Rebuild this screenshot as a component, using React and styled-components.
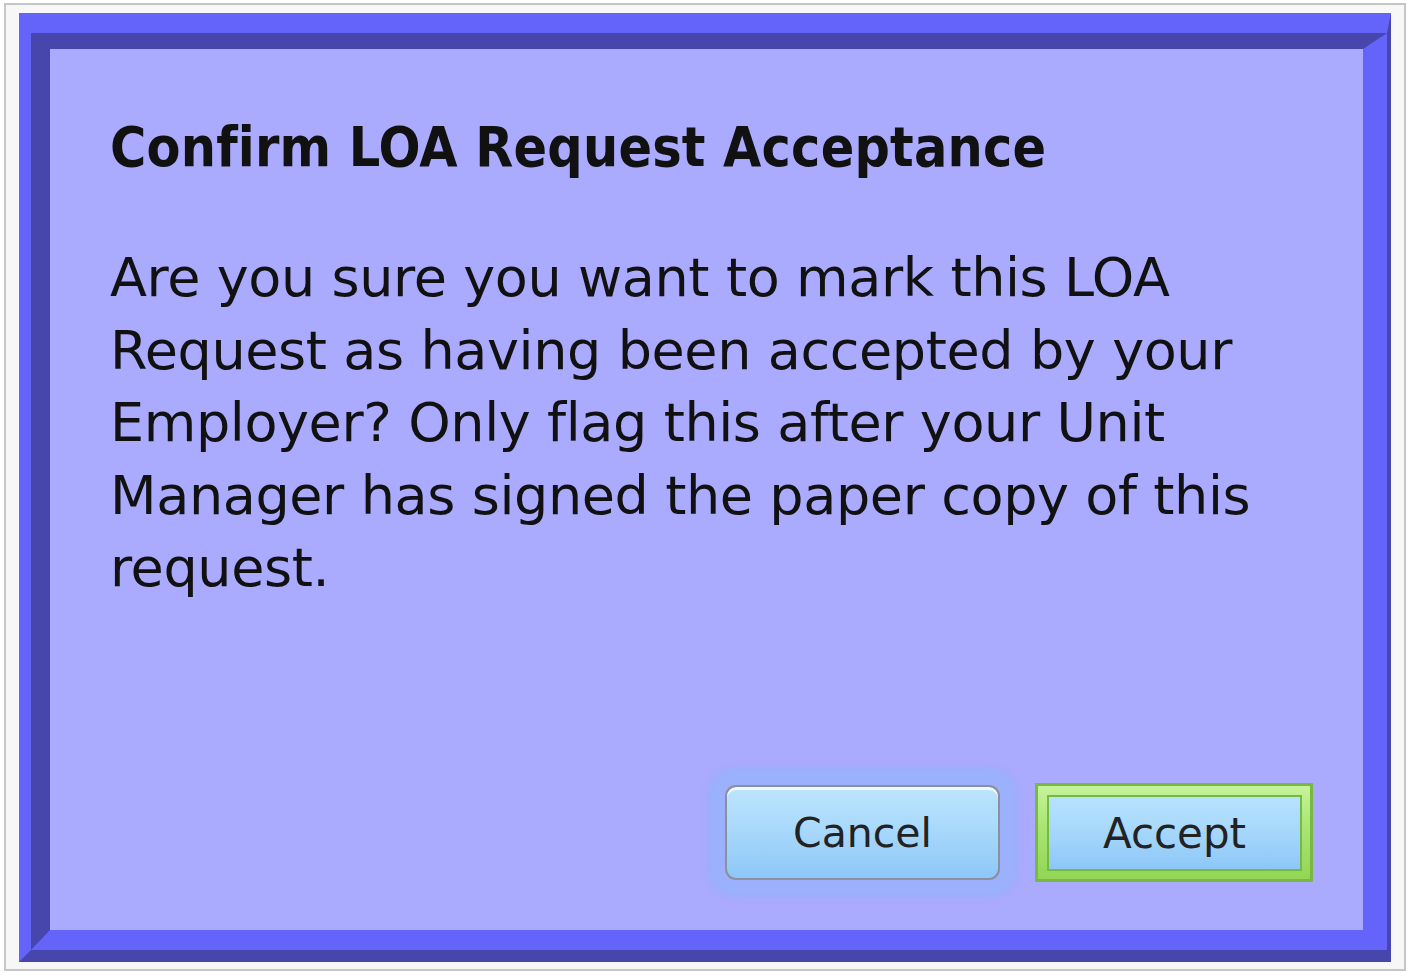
import styled, { createGlobalStyle } from "styled-components";

const GlobalStyle = createGlobalStyle`
  html, body {
    margin: 0;
    padding: 0;
    background: #ffffff;
  }
  * {
    box-sizing: border-box;
  }
`;

const Page = styled.div`
  display: flex;
  flex-direction: column;
  width: 1402px;
  height: 968px;
  margin: 3px 4px;
  padding: 8px 13px 7px 13px;
  background: #f7f7f7;
  border: 2px solid #c6c6c6;
`;

const FrameOuter = styled.div`
  flex: 1;
  display: flex;
  flex-direction: column;
  border-style: solid;
  border-width: 20px 4px 12px 12px;
  border-color: #6464fa #4646ac #4646ac #6464fa;
`;

const FrameInner = styled.div`
  flex: 1;
  display: flex;
  flex-direction: column;
  padding: 65px 50px 48px 60px;
  background: #aaaafe;
  border-style: solid;
  border-width: 16px 24px 20px 19px;
  border-color: #4646ac #6464fa #6464fa #4646ac;
  font-family: "DejaVu Sans", Verdana, sans-serif;
  color: #111;
`;

const Title = styled.h2`
  margin: 0;
  font-family: "DejaVu Sans Condensed", "DejaVu Sans", sans-serif;
  font-size: 55px;
  font-weight: 700;
  line-height: 1.2;
  letter-spacing: 0.2px;
`;

const Message = styled.p`
  margin: 62px 0 0 0;
  font-size: 54px;
  line-height: 72.5px;
  font-weight: 400;
  letter-spacing: -0.4px;
`;

const Actions = styled.div`
  margin-top: auto;
  display: flex;
  justify-content: flex-end;
  align-items: center;
  gap: 35px;
`;

const CancelButton = styled.button`
  width: 275px;
  height: 95px;
  border: 2px solid #8a909e;
  border-radius: 11px;
  background: linear-gradient(#bde5fd 0%, #a9d9fb 45%, #8dc7f8 100%);
  box-shadow: inset 0 3px 0 rgba(255, 255, 255, 0.75),
    0 0 0 13px #9cb1fd, 0 0 5px 18px rgba(152, 176, 253, 0.8);
  font-family: "DejaVu Sans", Verdana, sans-serif;
  font-size: 41px;
  color: #222;
  padding: 0;
  cursor: pointer;
`;

const AcceptFrame = styled.div`
  width: 278px;
  height: 99px;
  padding: 9px 8px 8px 9px;
  border: 3px solid #76bb40;
  background: linear-gradient(#c6f39b 0%, #ace676 40%, #92d556 100%);
`;

const AcceptButton = styled.button`
  width: 100%;
  height: 100%;
  border: 2px solid #74bb42;
  border-radius: 0;
  background: linear-gradient(#b7e2fd 0%, #a7d8fb 45%, #8dc7f8 100%);
  font-family: "DejaVu Sans", Verdana, sans-serif;
  font-size: 42px;
  color: #222;
  padding: 0;
  cursor: pointer;
`;

export default function App() {
  return (
    <>
      <GlobalStyle />
      <Page>
        <FrameOuter>
          <FrameInner>
            <Title>Confirm LOA Request Acceptance</Title>
            <Message>
              Are you sure you want to mark this LOA
              <br />
              Request as having been accepted by your
              <br />
              Employer? Only flag this after your Unit
              <br />
              Manager has signed the paper copy of this
              <br />
              request.
            </Message>
            <Actions>
              <CancelButton>Cancel</CancelButton>
              <AcceptFrame>
                <AcceptButton>Accept</AcceptButton>
              </AcceptFrame>
            </Actions>
          </FrameInner>
        </FrameOuter>
      </Page>
    </>
  );
}
